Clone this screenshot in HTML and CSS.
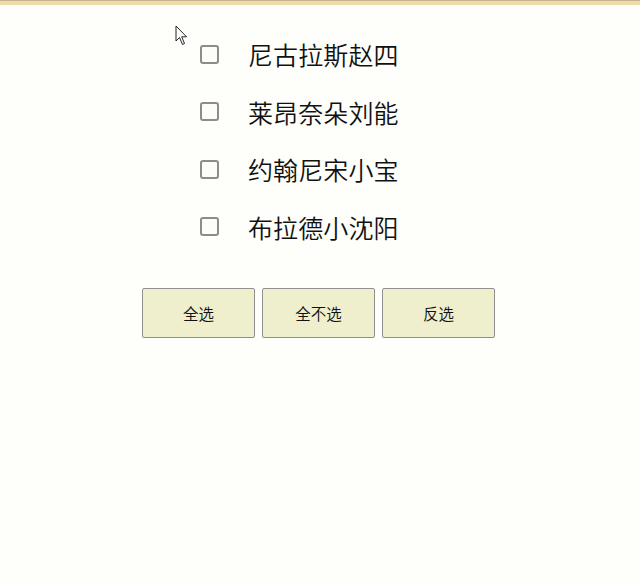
FILE: index.html
```html
<!DOCTYPE html>
<html lang="zh">
<head>
<meta charset="utf-8">
<link rel="stylesheet" href="styles.css">
</head>
<body>
<div class="topband"></div>
<main class="page">
  <ul class="list">
    <li class="item"><span class="box"></span><span class="name">尼古拉斯赵四</span></li>
    <li class="item"><span class="box"></span><span class="name">莱昂奈朵刘能</span></li>
    <li class="item"><span class="box"></span><span class="name">约翰尼宋小宝</span></li>
    <li class="item"><span class="box"></span><span class="name">布拉德小沈阳</span></li>
  </ul>
  <div class="buttons">
    <button class="btn">全选</button>
    <button class="btn">全不选</button>
    <button class="btn">反选</button>
  </div>
</main>
<svg class="cursor" width="14" height="22" viewBox="0 0 14 22"><path d="M1 1 L1 16 L4.5 12.5 L7.5 19.5 L9.5 18.5 L6.7 11.8 L11.5 11.8 Z" fill="#fff" stroke="#222" stroke-width="1" stroke-linejoin="round"/></svg>
</body>
</html>
```
FILE: styles.css
```css
html, body {
  margin: 0;
  padding: 0;
  background: #fefefa;
  font-family: "Noto Sans CJK SC", "Noto Sans", sans-serif;
}
body {
  position: relative;
  width: 640px;
  height: 584px;
  overflow: hidden;
}
.topband {
  height: 5px;
  background: #f1d9ab;
  border-top: 1px solid #c8b48a;
  box-sizing: border-box;
}
.page {
  display: flex;
  flex-direction: column;
  align-items: flex-start;
}
.list {
  list-style: none;
  margin: 0;
  padding: 36px 0 0 200px;
  display: flex;
  flex-direction: column;
  gap: 31.5px;
}
.item {
  display: flex;
  align-items: center;
  height: 26px;
}
.box {
  width: 19px;
  height: 19px;
  border: 2px solid #8c8c8c;
  border-radius: 3px;
  background: #fdfdf8;
  box-sizing: border-box;
  margin-right: 29px;
}
.name {
  font-size: 25px;
  font-weight: 350;
  line-height: 26px;
  color: #111;
  letter-spacing: 0.1px;
}
.buttons {
  display: flex;
  gap: 7px;
  padding: 48px 0 0 142px;
}
.btn {
  width: 113px;
  height: 50px;
  padding: 0;
  border: 1px solid #8f8f8f;
  border-radius: 2px;
  background: #efeecd;
  font-family: "Noto Sans CJK SC", sans-serif;
  font-size: 15.5px;
  font-weight: 350;
  color: #111;
}
.cursor {
  position: absolute;
  left: 175px;
  top: 25px;
}
```
